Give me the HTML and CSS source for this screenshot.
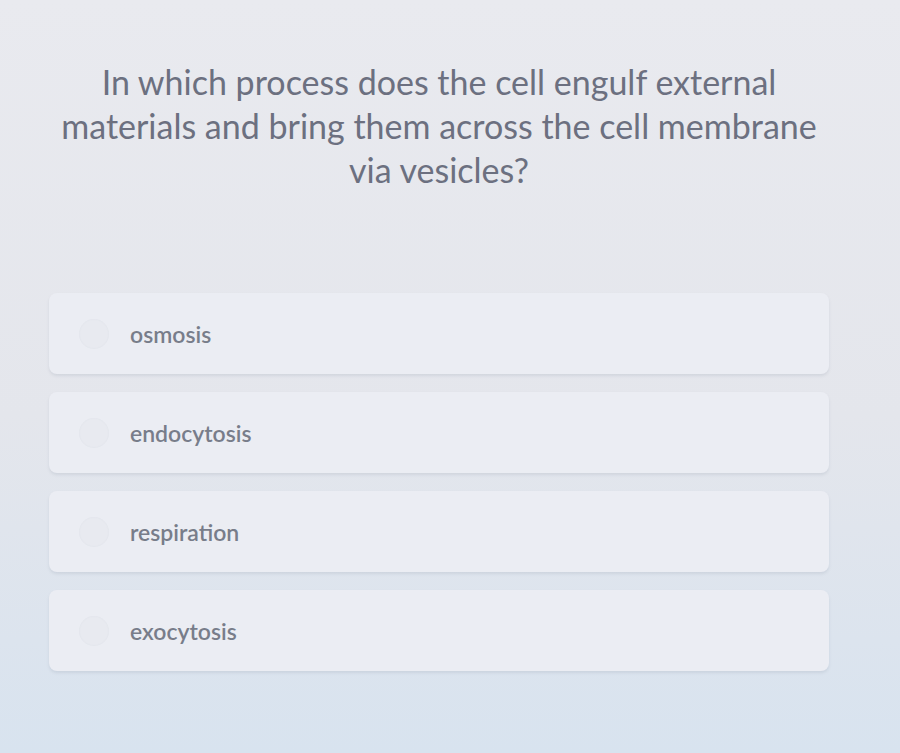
FILE: index.html
```html
<!DOCTYPE html>
<html lang="en">
<head>
  <meta charset="UTF-8" />
  <title>Quiz question</title>
  <link rel="stylesheet" href="styles.css">
</head>
<body>
  <div class="quiz">
    <h1 class="question">In which process does the cell engulf external materials and bring them across the cell membrane via vesicles?</h1>

    <div class="options">
      <label class="option"><span class="radio"></span><span class="text">osmosis</span></label>
      <label class="option"><span class="radio"></span><span class="text">endocytosis</span></label>
      <label class="option"><span class="radio"></span><span class="text">respiration</span></label>
      <label class="option"><span class="radio"></span><span class="text">exocytosis</span></label>
    </div>
  </div>
</body>
</html>
```

FILE: styles.css
```css
body {
  margin: 0;
  min-height: 100vh;
  font-family: Lato, "Open Sans", sans-serif;
  background: linear-gradient(180deg, #e9eaef 0%, #e4e6ec 55%, #d8e3ef 100%);
  box-sizing: border-box;
}

.quiz {
  width: 780px;
  margin-left: 49px;
  padding-top: 60px;
}

.question {
  margin: 0 auto;
  width: 770px;
  font-size: 34px;
  font-weight: normal;
  line-height: 44px;
  color: #6c7080;
  text-align: center;
}

.options {
  display: flex;
  flex-direction: column;
  gap: 18px;
  margin-top: 101px;
}

.option {
  display: flex;
  align-items: center;
  height: 81px;
  padding-left: 30px;
  background: #ebedf3;
  border-radius: 8px;
  box-shadow: 0 2px 3px rgba(120, 130, 150, 0.16);
  cursor: pointer;
}

.radio {
  width: 30px;
  height: 30px;
  border-radius: 50%;
  background: #e8eaf0;
  box-shadow: inset 0 0 2px rgba(120, 130, 150, 0.08);
}

.text {
  margin-left: 21px;
  font-size: 23px;
  font-weight: 600;
  color: #787d8a;
}
```
